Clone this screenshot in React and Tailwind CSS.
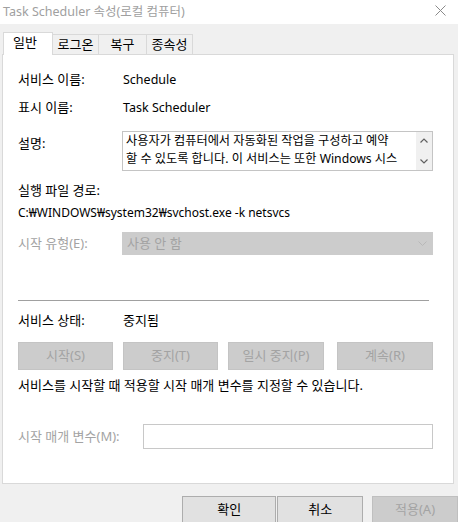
import React from 'react';

const font = "font-[Noto_Sans,Noto_Sans_CJK_KR,sans-serif]";

function Tab({ label, active, w }) {
  if (active) {
    return (
      <div className={`h-[23px] -mb-px bg-white border border-[#d9d9d9] border-b-0 flex items-center pl-[9px] relative z-10 ${w}`}>
        <span className="-mt-[2px]">{label}</span>
      </div>
    );
  }
  return (
    <div className={`h-[20px] border border-[#d9d9d9] border-b-0 -ml-px flex items-center justify-center bg-[#f0f0f0] ${w}`}>
      {label}
    </div>
  );
}

function DisabledButton({ label, w }) {
  return (
    <div className={`h-[28px] bg-[#cccccc] border border-[#c4c4c4] flex items-center justify-center text-[#a3a3a3] ${w}`}>
      {label}
    </div>
  );
}

export default function App() {
  return (
    <div className={`w-[458px] h-[522px] bg-[#f0f0f0] overflow-hidden text-[13px] text-black ${font}`}>
      {/* title bar */}
      <div className="h-[24px] bg-white flex items-center justify-between pl-[3px] pr-[12px]">
        <span className="text-[#a0a0a0] text-[12.5px]">Task Scheduler 속성(로컬 컴퓨터)</span>
        <svg width="11" height="11" viewBox="0 0 11 11" className="-mt-[3px]">
          <path d="M0.5 0.5 L10.5 10.5 M10.5 0.5 L0.5 10.5" stroke="#8a8a8a" strokeWidth="1" />
        </svg>
      </div>

      {/* tabs */}
      <div className="h-[30px] flex items-end pl-[3px]">
        <Tab label="일반" active w="w-[50px]" />
        <Tab label="로그온" w="w-[47px]" />
        <Tab label="복구" w="w-[49px]" />
        <Tab label="종속성" w="w-[47px]" />
      </div>

      {/* panel */}
      <div className="ml-[2px] w-[452px] h-[430px] bg-white border border-[#d9d9d9] pl-[15px] pr-[20px]">
        <div className="mt-[15px] h-[20px] flex items-center">
          <span className="w-[105px]">서비스 이름:</span>
          <span className="text-[12.5px]">Schedule</span>
        </div>
        <div className="mt-[8px] h-[20px] flex items-center">
          <span className="w-[105px]">표시 이름:</span>
          <span className="text-[12.5px]">Task Scheduler</span>
        </div>
        <div className="mt-[13px] flex">
          <span className="w-[104px] mt-[3px] h-[20px] flex items-center">설명:</span>
          <div className="w-[311px] h-[40px] border border-[#c4c4c4] flex">
            <div className="flex-1 pl-[3px] leading-[18px] overflow-hidden whitespace-nowrap text-[12.2px]">
              <div>사용자가 컴퓨터에서 자동화된 작업을 구성하고 예약</div>
              <div>할 수 있도록 합니다. 이 서비스는 또한 Windows 시스</div>
            </div>
            <div className="w-[16px] bg-[#f0f0f0] flex flex-col items-center justify-between py-[6px]">
              <svg width="8" height="5" viewBox="0 0 8 5">
                <path d="M0.5 4.5 L4 1 L7.5 4.5" fill="none" stroke="#606060" strokeWidth="1.2" />
              </svg>
              <svg width="8" height="5" viewBox="0 0 8 5">
                <path d="M0.5 0.5 L4 4 L7.5 0.5" fill="none" stroke="#606060" strokeWidth="1.2" />
              </svg>
            </div>
          </div>
        </div>
        <div className="mt-[10px] h-[20px] flex items-center">실행 파일 경로:</div>
        <div className="mt-[2px] h-[20px] flex items-center text-[12px]">C:₩WINDOWS₩system32₩svchost.exe -k netsvcs</div>
        <div className="mt-[9px] flex items-center">
          <span className="w-[104px] text-[#a3a3a3]">시작 유형(E):</span>
          <div className="w-[311px] h-[23px] bg-[#cccccc] flex items-center justify-between pl-[5px] pr-[6px] text-[#a3a3a3]">
            <span>사용 안 함</span>
            <svg width="9" height="5" viewBox="0 0 9 5">
              <path d="M0.5 0.5 L4.5 4.5 L8.5 0.5" fill="none" stroke="#b8b8b8" strokeWidth="1" />
            </svg>
          </div>
        </div>
        <div className="mt-[45px] w-[411px] h-px bg-[#a0a0a0]" />
        <div className="mt-[10px] h-[20px] flex items-center">
          <span className="w-[105px]">서비스 상태:</span>
          <span>중지됨</span>
        </div>
        <div className="mt-[11px] flex">
          <DisabledButton label="시작(S)" w="w-[95px]" />
          <div className="w-[10px]" />
          <DisabledButton label="중지(T)" w="w-[95px]" />
          <div className="w-[10px]" />
          <DisabledButton label="일시 중지(P)" w="w-[96px]" />
          <div className="w-[13px]" />
          <DisabledButton label="계속(R)" w="w-[96px]" />
        </div>
        <div className="mt-[6px] h-[20px] flex items-center">서비스를 시작할 때 적용할 시작 매개 변수를 지정할 수 있습니다.</div>
        <div className="mt-[28px] flex items-center">
          <span className="w-[125px] text-[#a3a3a3]">시작 매개 변수(M):</span>
          <div className="w-[290px] h-[25px] border border-[#c8c8c8] bg-white" />
        </div>
      </div>

      {/* bottom buttons */}
      <div className="mt-[12px] flex pl-[182px]">
        <div className="w-[95px] h-[28px] bg-[#e1e1e1] border border-[#adadad] flex items-center justify-center">확인</div>
        <div className="w-px" />
        <div className="w-[86px] h-[28px] bg-[#e1e1e1] border border-[#adadad] flex items-center justify-center">취소</div>
        <div className="w-[9px] shrink-0" />
        <div className="w-[86px] shrink-0 h-[28px] bg-[#cccccc] border border-[#bfbfbf] flex items-center justify-center text-[#a3a3a3]">적용(A)</div>
      </div>
    </div>
  );
}
